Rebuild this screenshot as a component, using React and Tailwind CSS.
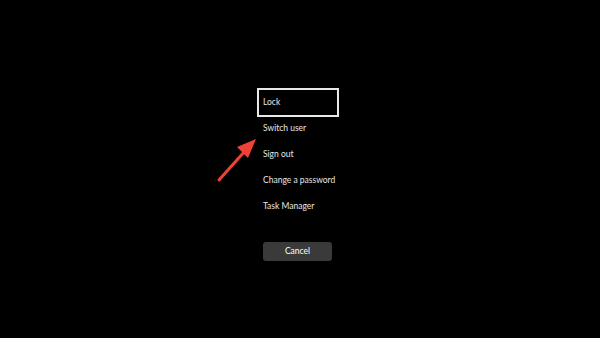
const items = ["Switch user", "Sign out", "Change a password", "Task Manager"];

export default function App() {
  return (
    <div
      className="relative w-[600px] h-[338px] bg-black overflow-hidden text-[#e6e6e6]"
      style={{ fontFamily: 'Lato, "Open Sans", sans-serif' }}
    >
      <div className="pl-[257px] pt-[88px] flex flex-col">
        <div className="w-[82px] h-[29px] -mb-[2px] border-2 border-[#e8e8e8] flex items-center pl-[4px] text-[8.5px]">
          Lock
        </div>
        {items.map((t) => (
          <div key={t} className="h-[26px] flex items-center pl-[6px] text-[8.5px] whitespace-nowrap">
            {t}
          </div>
        ))}
        <button className="mt-[23px] ml-[6px] w-[69px] h-[19px] rounded-[3px] bg-[#3a3a3a] text-[8.5px] text-white flex items-center justify-center">
          Cancel
        </button>
      </div>

      {/* annotation arrow */}
      <svg className="absolute left-0 top-0" width="600" height="338">
        <line x1="219" y1="180" x2="245" y2="151" stroke="#ef4136" strokeWidth="3" strokeLinecap="round" />
        <polygon points="256,139 237,147 248,158" fill="#ef4136" />
      </svg>
    </div>
  );
}
